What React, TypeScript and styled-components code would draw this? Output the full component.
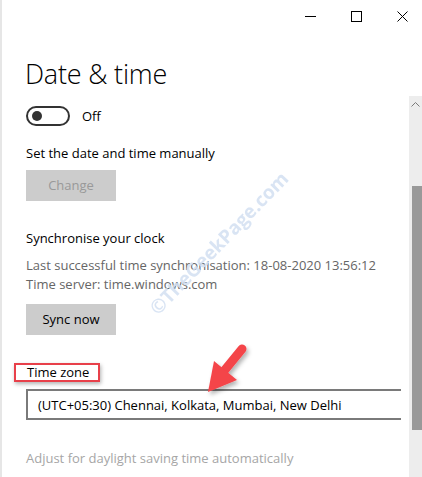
import React from "react";
import styled, { createGlobalStyle } from "styled-components";

const GlobalStyle = createGlobalStyle`
  html, body {
    margin: 0;
    padding: 0;
    background: #ffffff;
  }
  body {
    font-family: "Open Sans", "Noto Sans", "Liberation Sans", sans-serif;
  }
`;

const Window = styled.div`
  position: relative;
  width: 422px;
  height: 477px;
  overflow: hidden;
  box-sizing: border-box;
  border-left: 2px solid #e6e6e6;
  background: #ffffff;
  display: flex;
  flex-direction: column;
`;

const TitleBar = styled.div`
  height: 32px;
  display: flex;
  justify-content: flex-end;
  margin-right: -3px;
  flex-shrink: 0;
`;

const ControlButton = styled.div`
  width: 46px;
  height: 32px;
  display: flex;
  align-items: center;
  justify-content: center;
`;

const Body = styled.div`
  flex: 1;
  display: flex;
`;

const Content = styled.div`
  flex: 1;
  padding-left: 24px;
  padding-right: 8px;
  display: flex;
  flex-direction: column;
  color: #000;
  font-size: 13px;
`;

const Title = styled.h1`
  margin: 24px 0 0 -1px;
  font-weight: 300;
  font-size: 27px;
  line-height: 36px;
  color: #000;
  letter-spacing: -0.2px;
`;

const ToggleRow = styled.div`
  margin-top: 14px;
  display: flex;
  align-items: center;
  gap: 12px;
  height: 20px;
`;

const Toggle = styled.div`
  width: 44px;
  height: 20px;
  box-sizing: border-box;
  border: 2px solid #333;
  border-radius: 10px;
  position: relative;
  display: flex;
  align-items: center;
  padding-left: 4px;
`;

const Knob = styled.div`
  width: 10px;
  height: 10px;
  border-radius: 50%;
  background: #333;
`;

const Label = styled.div<{ $tone?: "dark" | "mid" | "light"; $top?: number }>`
  margin-top: ${(p) => p.$top ?? 0}px;
  line-height: 19px;
  color: ${(p) =>
    p.$tone === "mid" ? "#666666" : p.$tone === "light" ? "#a6a6a6" : "#000000"};
  white-space: nowrap;
`;

const Button = styled.div<{ $disabled?: boolean; $top?: number }>`
  margin-top: ${(p) => p.$top ?? 0}px;
  width: 90px;
  height: 31px;
  background: #cccccc;
  color: ${(p) => (p.$disabled ? "#999999" : "#000000")};
  display: flex;
  align-items: center;
  justify-content: center;
  line-height: 1;
`;

const ZoneLabel = styled.div`
  margin-top: 28px;
  margin-left: -12px;
  align-self: flex-start;
  box-sizing: border-box;
  height: 19px;
  width: 86px;
  padding-left: 11px;
  border: 2px solid #e8404a;
  box-shadow: 1px 2px 4px rgba(0, 0, 0, 0.3);
  display: flex;
  align-items: center;
  line-height: 1;
`;

const Dropdown = styled.div`
  margin-top: 7px;
  height: 31px;
  box-sizing: border-box;
  border: 2px solid #7a7a7a;
  border-right: none;
  padding-left: 10px;
  display: flex;
  align-items: center;
  white-space: nowrap;
`;

const ScrollTrack = styled.div`
  width: 13px;
  margin-top: 64px;
  background: #ededed;
  display: flex;
  flex-direction: column;
  align-items: flex-end;
`;

const ScrollArrow = styled.div`
  width: 13px;
  height: 16px;
  display: flex;
  align-items: center;
  justify-content: center;
`;

const ScrollThumb = styled.div`
  margin-top: 74px;
  width: 10px;
  height: 244px;
  background: #999999;
`;

const Overlay = styled.svg`
  position: absolute;
  left: 0;
  top: 0;
  pointer-events: none;
`;

const Watermark = styled.div`
  position: absolute;
  left: 122px;
  top: 230px;
  transform: rotate(-46deg);
  font-family: "Open Sans", "Liberation Sans", sans-serif;
  font-weight: 700;
  font-size: 19px;
  color: #d3e0f2;
  opacity: 0.85;
  pointer-events: none;
  white-space: nowrap;
`;

export default function App() {
  return (
    <>
      <GlobalStyle />
      <Window>
        <TitleBar>
          <ControlButton>
            <svg width="11" height="11" viewBox="0 0 11 11">
              <line x1="0" y1="5.5" x2="11" y2="5.5" stroke="#000" strokeWidth="1" />
            </svg>
          </ControlButton>
          <ControlButton>
            <svg width="11" height="11" viewBox="0 0 11 11">
              <rect x="0.5" y="0.5" width="10" height="10" fill="none" stroke="#000" strokeWidth="1" />
            </svg>
          </ControlButton>
          <ControlButton>
            <svg width="11" height="11" viewBox="0 0 11 11">
              <path d="M0.5 0.5 L10.5 10.5 M10.5 0.5 L0.5 10.5" stroke="#000" strokeWidth="1" />
            </svg>
          </ControlButton>
        </TitleBar>
        <Body>
          <Content>
            <Title>Date &amp; time</Title>
            <ToggleRow>
              <Toggle>
                <Knob />
              </Toggle>
              <span>Off</span>
            </ToggleRow>
            <Label $top={18}>Set the date and time manually</Label>
            <Button $disabled $top={7}>Change</Button>
            <Label $top={28}>Synchronise your clock</Label>
            <Label $tone="mid" $top={8}>
              Last successful time synchronisation: 18-08-2020 13:56:12
            </Label>
            <Label $tone="mid">Time server: time.windows.com</Label>
            <Button $top={10}>Sync now</Button>
            <ZoneLabel>Time zone</ZoneLabel>
            <Dropdown>(UTC+05:30) Chennai, Kolkata, Mumbai, New Delhi</Dropdown>
            <Label $tone="light" $top={29}>
              Adjust for daylight saving time automatically
            </Label>
          </Content>
          <ScrollTrack>
            <ScrollArrow>
              <svg width="9" height="5" viewBox="0 0 9 5">
                <path d="M0.5 4.5 L4.5 0.5 L8.5 4.5" fill="none" stroke="#7a7a7a" strokeWidth="1" />
              </svg>
            </ScrollArrow>
            <ScrollThumb />
          </ScrollTrack>
        </Body>
        <Watermark>©TheGeekPage.com</Watermark>
        <Overlay width="422" height="477" viewBox="0 0 422 477">
          <defs>
            <filter id="arrowShadow" x="-30%" y="-30%" width="160%" height="160%">
              <feDropShadow dx="2" dy="3" stdDeviation="2" floodColor="#000" floodOpacity="0.3" />
            </filter>
          </defs>
          <g filter="url(#arrowShadow)">
            <line x1="240" y1="349" x2="222" y2="371" stroke="#f4444a" strokeWidth="9" strokeLinecap="round" />
            <path d="M206 392 L212 361 L235 380 Z" fill="#f4444a" />
          </g>
        </Overlay>
      </Window>
    </>
  );
}
